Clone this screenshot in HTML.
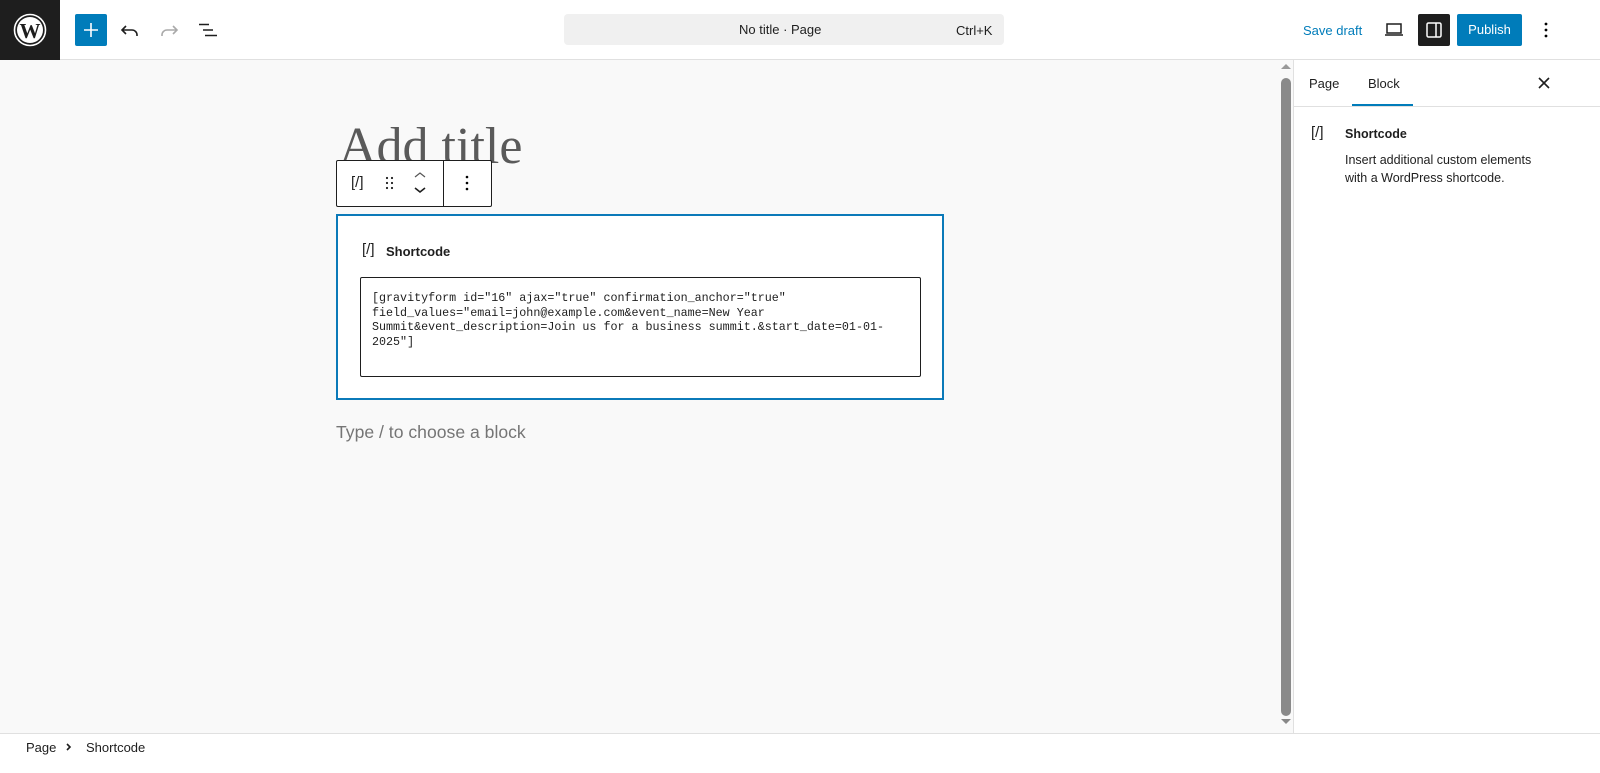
<!DOCTYPE html>
<html><head><meta charset="utf-8"><style>
*{box-sizing:border-box;margin:0;padding:0}
body{width:1600px;height:773px;overflow:hidden;background:#fff;font-family:"Liberation Sans",sans-serif;color:#1e1e1e;position:relative;font-size:13px}
.abs{position:absolute}
</style></head><body>
<div class="abs" style="left:0;top:0;width:1600px;height:60px;background:#fff;border-bottom:1px solid #e0e0e0"></div>
<div class="abs" style="left:0;top:0;width:60px;height:60px;background:#1e1e1e"></div>
<svg class="abs" style="left:13px;top:13px" width="34" height="34" viewBox="0 0 34 34"><circle cx="17" cy="17" r="15.5" fill="none" stroke="#fff" stroke-width="1.6"/><circle cx="17" cy="17" r="13" fill="#fff"/><text x="17" y="25" text-anchor="middle" font-family="Liberation Serif" font-weight="bold" font-size="21" fill="#1e1e1e">W</text></svg>
<div class="abs" style="left:75px;top:14px;width:32px;height:32px;background:#007cba;border-radius:2px"></div>
<svg class="abs" style="left:75px;top:14px" width="32" height="32"><path d="M16 9v14M9 16h14" stroke="#fff" stroke-width="1.6"/></svg>
<svg class="abs" style="left:118px;top:18px" width="24" height="24"><path d="M8 8l-4 4 4 4M4 12h10a5 5 0 0 1 5 5v1" fill="none" stroke="#1e1e1e" stroke-width="1.6"/></svg>
<svg class="abs" style="left:157px;top:18px" width="24" height="24"><path d="M16 8l4 4-4 4M20 12H10a5 5 0 0 0-5 5v1" fill="none" stroke="#aaa" stroke-width="1.6"/></svg>
<svg class="abs" style="left:196px;top:18px" width="24" height="24"><path d="M3 6.5h10M7 12h10M9 17.5h12" stroke="#1e1e1e" stroke-width="1.6"/></svg>
<div class="abs" style="left:564px;top:14px;width:440px;height:31px;background:#f0f0f0;border-radius:4px"></div>
<div class="abs" style="left:739px;top:22px;font-size:13px">No title · Page</div>
<div class="abs" style="left:956px;top:23px;font-size:13px">Ctrl+K</div>
<div class="abs" style="left:1303px;top:23px;font-size:13px;color:#007cba">Save draft</div>
<svg class="abs" style="left:1382px;top:18px" width="24" height="24"><rect x="5" y="6" width="14" height="9" fill="none" stroke="#1e1e1e" stroke-width="1.5"/><path d="M3 17h18" stroke="#1e1e1e" stroke-width="1.6"/></svg>
<div class="abs" style="left:1418px;top:14px;width:32px;height:32px;background:#1e1e1e;border-radius:2px"></div>
<svg class="abs" style="left:1418px;top:14px" width="32" height="32"><rect x="9" y="9" width="14" height="14" rx="1.5" fill="none" stroke="#fff" stroke-width="1.5"/><path d="M18 9v14" stroke="#fff" stroke-width="1.5"/></svg>
<div class="abs" style="left:1457px;top:14px;width:65px;height:32px;background:#007cba;border-radius:2px;color:#fff;text-align:center;line-height:32px">Publish</div>
<svg class="abs" style="left:1534px;top:18px" width="24" height="24"><circle cx="12" cy="6" r="1.4"/><circle cx="12" cy="12" r="1.4"/><circle cx="12" cy="18" r="1.4"/></svg>
<div class="abs" style="left:0;top:60px;width:1293px;height:673px;background:#f9f9f9"></div>
<div class="abs" style="left:1281px;top:78px;width:10px;height:638px;background:#8a8a8a;border-radius:5px"></div>
<svg class="abs" style="left:1281px;top:63px" width="10" height="8"><path d="M0 6l5-5 5 5z" fill="#999"/></svg>
<svg class="abs" style="left:1281px;top:718px" width="10" height="8"><path d="M0 1l5 5 5-5z" fill="#888"/></svg>
<div class="abs" style="left:339px;top:117px;font-family:'Liberation Serif',serif;font-size:52px;color:#5a5a5a">Add title</div>
<div class="abs" style="left:336px;top:160px;width:156px;height:47px;background:#fff;border:1px solid #1e1e1e;border-radius:2px"></div>
<div class="abs" style="left:443px;top:160px;width:1px;height:47px;background:#1e1e1e"></div>
<div class="abs" style="left:351px;top:174px;font-size:15px">[/]</div>
<svg class="abs" style="left:382px;top:174px" width="16" height="18"><g fill="#1e1e1e"><circle cx="5" cy="4" r="1.1"/><circle cx="10" cy="4" r="1.1"/><circle cx="5" cy="9" r="1.1"/><circle cx="10" cy="9" r="1.1"/><circle cx="5" cy="14" r="1.1"/><circle cx="10" cy="14" r="1.1"/></g></svg>
<svg class="abs" style="left:410px;top:168px" width="20" height="30"><path d="M5 9l5-4 5 4" fill="none" stroke="#555" stroke-width="1.2"/><path d="M5 20l5 4 5-4" fill="none" stroke="#1e1e1e" stroke-width="1.6"/></svg>
<svg class="abs" style="left:459px;top:173px" width="16" height="20"><circle cx="8" cy="4" r="1.3"/><circle cx="8" cy="10" r="1.3"/><circle cx="8" cy="16" r="1.3"/></svg>
<div class="abs" style="left:336px;top:214px;width:608px;height:186px;background:#fff;border:2px solid #0b7ab9"></div>
<div class="abs" style="left:362px;top:241px;font-size:15px">[/]</div>
<div class="abs" style="left:386px;top:244px;font-size:13px;font-weight:bold">Shortcode</div>
<div class="abs" style="left:360px;top:277px;width:561px;height:100px;background:#fff;border:1px solid #1e1e1e;border-radius:2px"></div>
<div class="abs" style="left:372px;top:291px;font-family:'Liberation Mono',monospace;font-size:11.7px;line-height:14.6px;white-space:pre;color:#1e1e1e">[gravityform id="16" ajax="true" confirmation_anchor="true"
field_values="email=john@example.com&amp;event_name=New Year
Summit&amp;event_description=Join us for a business summit.&amp;start_date=01-01-
2025"]</div>
<div class="abs" style="left:336px;top:422px;font-size:17.6px;color:#757575">Type / to choose a block</div>
<div class="abs" style="left:1293px;top:60px;width:1px;height:673px;background:#e0e0e0"></div>
<div class="abs" style="left:1294px;top:106px;width:306px;height:1px;background:#e0e0e0"></div>
<div class="abs" style="left:1309px;top:76px">Page</div>
<div class="abs" style="left:1368px;top:76px">Block</div>
<div class="abs" style="left:1352px;top:104px;width:61px;height:2px;background:#007cba"></div>
<svg class="abs" style="left:1536px;top:75px" width="16" height="16"><path d="M3 3l10 10M13 3L3 13" stroke="#1e1e1e" stroke-width="1.6"/></svg>
<div class="abs" style="left:1311px;top:124px;font-size:15px">[/]</div>
<div class="abs" style="left:1345px;top:127px;font-weight:bold;font-size:12.5px">Shortcode</div>
<div class="abs" style="left:1345px;top:151px;font-size:12.5px;line-height:18px;width:200px">Insert additional custom elements with a WordPress shortcode.</div>
<div class="abs" style="left:0;top:733px;width:1600px;height:1px;background:#e0e0e0"></div>
<div class="abs" style="left:26px;top:740px">Page</div>
<svg class="abs" style="left:64px;top:741px" width="10" height="12"><path d="M3 3l3 3-3 3" fill="none" stroke="#1e1e1e" stroke-width="1.6"/></svg>
<div class="abs" style="left:86px;top:740px">Shortcode</div>
</body></html>
